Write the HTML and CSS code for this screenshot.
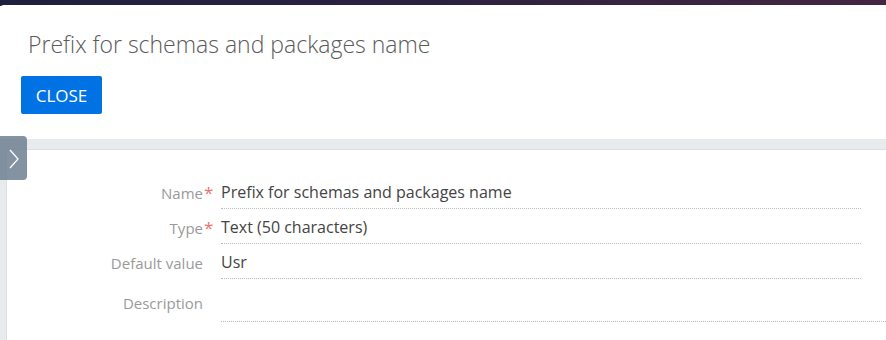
FILE: index.html
```html
<!DOCTYPE html>
<html>
<head>
<meta charset="utf-8">
<link rel="stylesheet" href="styles.css">
</head>
<body>
<div class="topbar"></div>
<div class="dialog">
  <div class="header">
    <h1 class="title">Prefix for schemas and packages name</h1>
    <button class="btn-close">CLOSE</button>
  </div>
  <div class="band"></div>
  <div class="body">
    <div class="strip"></div>
    <div class="tab"><svg width="12" height="22" viewBox="0 0 12 22"><path d="M2 2 L10 11 L2 20" fill="none" stroke="#fff" stroke-width="1.3"/></svg></div>
    <div class="form">
      <div class="row">
        <div class="label"><span class="ltext">Name<span class="req">*</span></span></div>
        <div class="value">Prefix for schemas and packages name</div>
      </div>
      <div class="row">
        <div class="label"><span class="ltext">Type<span class="req">*</span></span></div>
        <div class="value">Text (50 characters)</div>
      </div>
      <div class="row">
        <div class="label"><span class="ltext">Default value</span></div>
        <div class="value">Usr</div>
      </div>
      <div class="row row-desc">
        <div class="label"><span class="ltext">Description</span></div>
        <div class="value value-wide"></div>
      </div>
    </div>
  </div>
</div>
</body>
</html>
```
FILE: styles.css
```css
html, body {
  margin: 0;
  padding: 0;
  background: #fff;
  font-family: "Open Sans", "Liberation Sans", sans-serif;
  overflow: hidden;
}
.topbar {
  height: 6px;
  background: linear-gradient(90deg, #1f203d 0%, #2c2240 50%, #452640 100%);
}
.dialog {
  background: #fff;
  border-top-left-radius: 4px;
  margin-top: -1px;
  position: relative;
}
.header {
  padding: 29px 0 0 21px;
  height: 109px;
  box-sizing: border-box;
}
.title {
  margin: 0 0 0 7px;
  font-weight: 300;
  font-size: 23px;
  line-height: 20px;
  color: #5a5a5a;
}
.btn-close {
  margin-top: 22px;
  width: 81px;
  height: 38px;
  border: none;
  border-radius: 2px;
  background: #0072e3;
  color: #fff;
  font-family: "Open Sans", "Liberation Sans", sans-serif;
  font-size: 17px;
  padding: 0;
  display: block;
}
.band {
  height: 10px;
  margin-top: 25px;
  background: #e8ebeb;
  border-bottom: 1px solid #dde0e1;
}
.body {
  position: relative;
  display: flex;
  height: 200px;
}
.strip {
  width: 6px;
  background: #e8ebeb;
  border-right: 1px solid #dde0e1;
  flex: none;
}
.tab {
  position: absolute;
  left: 0;
  top: -14px;
  width: 27px;
  height: 44px;
  background: rgba(110, 128, 145, 0.85);
  border-radius: 0 4px 4px 0;
  display: flex;
  align-items: flex-start;
  justify-content: center;
  padding-top: 12px;
  box-sizing: border-box;
}
.form {
  flex: 1;
  padding-top: 24px;
}
.row {
  display: flex;
  height: 35px;
}
.label {
  width: 196px;
  flex: none;
  text-align: right;
  font-size: 15px;
  color: #9a9a9a;
  padding-top: 3px;
  line-height: 32px;
}
.ltext {
  position: relative;
}
.req {
  position: absolute;
  left: 100%;
  top: -6px;
  margin-left: 1px;
  color: #f2716b;
  font-size: 17px;
}
.value {
  margin-left: 18px;
  width: 640px;
  border-bottom: 1px dotted #bdbdbd;
  box-sizing: border-box;
  font-size: 16px;
  color: #444;
  padding-top: 3px;
  line-height: 31px;
}
.row-desc {
  height: 43px;
}
.row-desc .label {
  padding-top: 8px;
}
.value-wide {
  width: auto;
  flex: 1;
}
```
